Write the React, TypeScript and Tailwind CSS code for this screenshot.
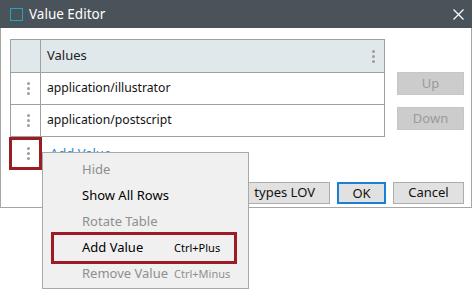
import React from "react";

function Kebab({ className = "" }: { className?: string }) {
  return (
    <div className={`flex flex-col gap-[2px] ${className}`}>
      <span className="h-[3px] w-[3px] rounded-full bg-[#9d9d9d]" />
      <span className="h-[3px] w-[3px] rounded-full bg-[#9d9d9d]" />
      <span className="h-[3px] w-[3px] rounded-full bg-[#9d9d9d]" />
    </div>
  );
}

const rows = ["application/illustrator", "application/postscript"];

const menuItems = [
  { label: "Hide", disabled: true },
  { label: "Show All Rows" },
  { label: "Rotate Table", disabled: true },
  { label: "Add Value", shortcut: "Ctrl+Plus" },
  { label: "Remove Value", shortcut: "Ctrl+Minus", disabled: true },
];

export default function App() {
  return (
    <div className="relative h-[289px] w-[473px] overflow-hidden bg-white font-['Noto_Sans',sans-serif] text-[13px] text-[#111]">
      {/* title bar */}
      <div className="flex h-[28px] w-[472px] items-center bg-[#4b535a] pl-[10px] pr-[8px] text-white">
        <div className="h-[13px] w-[13px] border-[1.5px] border-[#1fa6bf]" />
        <span className="ml-[6px] text-[13.5px]">Value Editor</span>
        <svg className="ml-auto" width="11" height="11" viewBox="0 0 11 11">
          <path d="M0.5 0.5 L10.5 10.5 M10.5 0.5 L0.5 10.5" stroke="#fff" strokeWidth="1.2" />
        </svg>
      </div>

      {/* body */}
      <div className="flex h-[180px] w-[472px] flex-col border-x border-b border-[#a6a6a6] pl-[9px] pt-[11px]">
        <div className="flex">
          <div className="w-[375px] border-x border-t border-[#a0a0a0]">
            <div className="flex h-[33px] border-b border-[#a0a0a0] bg-[#e1e8eb]">
              <div className="w-[30px] border-r border-[#a0a0a0]" />
              <div className="flex flex-1 items-center pl-[6px] pr-[9px] text-[#222]">
                <span>Values</span>
                <Kebab className="ml-auto" />
              </div>
            </div>
            {rows.map((r) => (
              <div key={r} className="flex h-[32px] border-b border-[#a0a0a0]">
                <div className="flex w-[30px] items-center border-r border-[#a0a0a0] pl-[16px]">
                  <Kebab />
                </div>
                <div className="flex flex-1 items-center pl-[6px] text-[12.2px]">{r}</div>
              </div>
            ))}
          </div>
          <div className="ml-[12px] mt-[33px] flex w-[67px] flex-col gap-[12px]">
            <button className="h-[23px] border border-[#c6c6c6] bg-[#cccccc] text-[13px] text-[#9a9a9a]">Up</button>
            <button className="h-[23px] border border-[#c6c6c6] bg-[#cccccc] text-[13px] text-[#9a9a9a]">Down</button>
          </div>
        </div>

        <div className="flex h-[33px] items-center">
          <div className="-ml-px -mt-px flex h-[33px] w-[33px] items-center border-[3px] border-[#9b1c22] pl-[15px]">
            <Kebab />
          </div>
          <span className="ml-[8px] text-[#2a8ad6]">Add Value</span>
        </div>

        <div className="mt-auto flex justify-end gap-[7px] pb-[3px] pr-[7px]">
          <button className="h-[22px] w-[90px] border border-[#adadad] bg-[#e1e1e1] pr-[14px] text-right text-[13px]">types LOV</button>
          <button className="h-[22px] w-[49px] border-2 border-[#1b7fd6] bg-[#e1e1e1] text-[13px]">OK</button>
          <button className="h-[22px] w-[71px] border border-[#adadad] bg-[#e1e1e1] text-[13px]">Cancel</button>
        </div>
      </div>

      {/* context menu */}
      <div className="absolute left-[42px] top-[152px] w-[207px] border border-[#a8a8a8] bg-[#f0f0f0] pb-px pt-[4px]">
        {menuItems.map((m) => (
          <div key={m.label} className={`flex h-[26px] items-center pl-[39px] ${m.disabled ? "text-[#8f8f8f]" : "text-black"}`}>
            <span className="w-[92px]">{m.label}</span>
            {m.shortcut && <span className="text-[11px]">{m.shortcut}</span>}
          </div>
        ))}
        <div className="absolute left-[8px] top-[79px] h-[32px] w-[186px] border-[3px] border-[#9b1c22]" />
      </div>
    </div>
  );
}
